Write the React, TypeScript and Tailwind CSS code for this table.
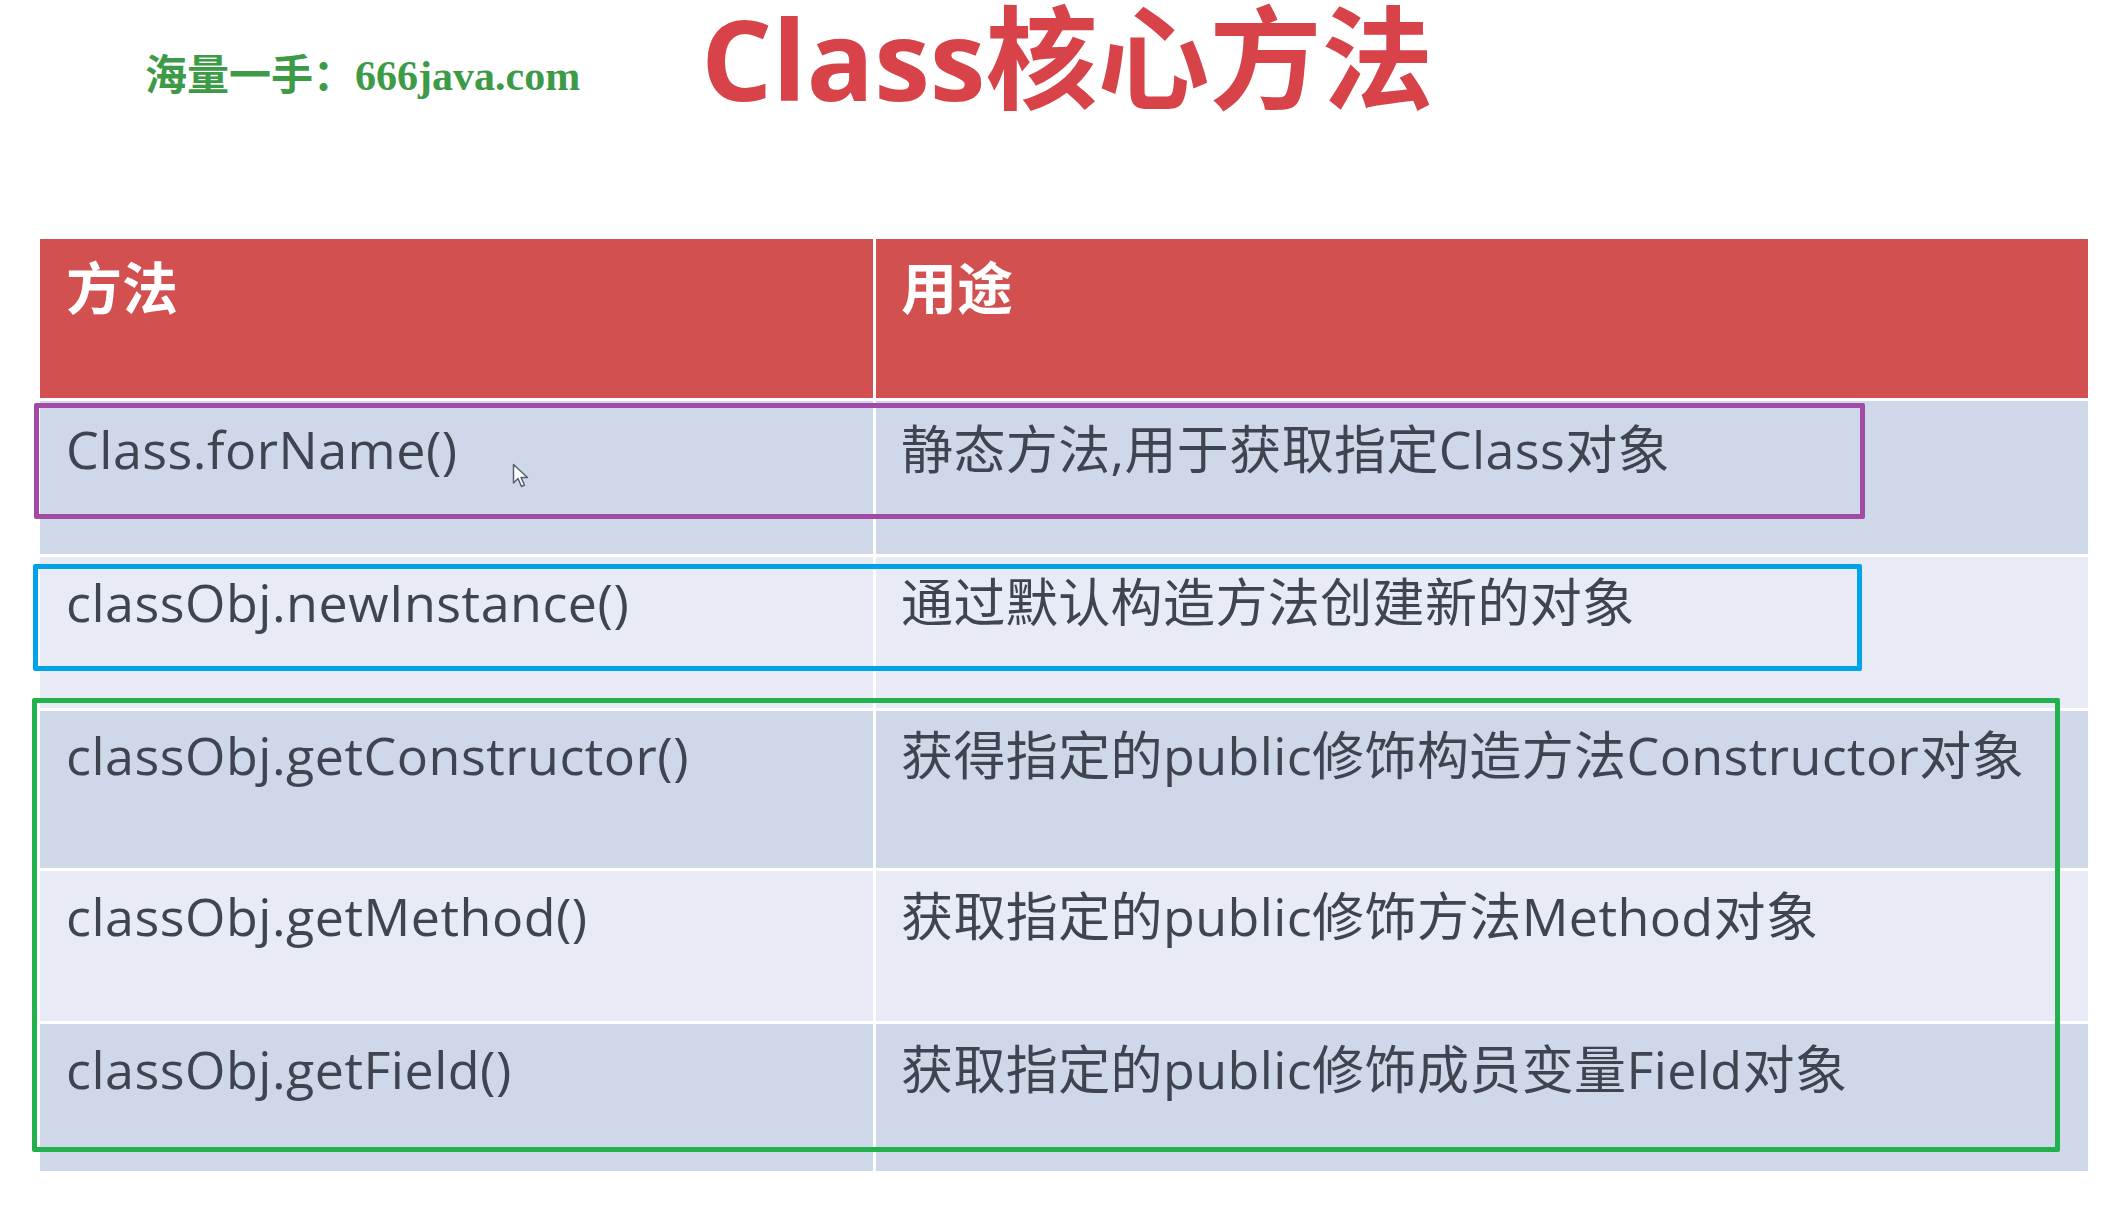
const ROWS = [
  {
    method: "Class.forName()",
    use: "静态方法,用于获取指定Class对象",
    bg: "bg-[#cfd8e9]",
    h: "h-[153px]",
    pt: "pt-[17px]",
  },
  {
    method: "classObj.newInstance()",
    use: "通过默认构造方法创建新的对象",
    bg: "bg-[#e8ebf5]",
    h: "h-[151px]",
    pt: "pt-[14px]",
  },
  {
    method: "classObj.getConstructor()",
    use: "获得指定的public修饰构造方法Constructor对象",
    bg: "bg-[#cfd8e9]",
    h: "h-[157px]",
    pt: "pt-[13px]",
  },
  {
    method: "classObj.getMethod()",
    use: "获取指定的public修饰方法Method对象",
    bg: "bg-[#e8ebf5]",
    h: "h-[150px]",
    pt: "pt-[14px]",
  },
  {
    method: "classObj.getField()",
    use: "获取指定的public修饰成员变量Field对象",
    bg: "bg-[#cfd8e9]",
    h: "h-[147px]",
    pt: "pt-[14px]",
  },
];

function Cursor() {
  return (
    <svg
      className="absolute left-[512px] top-[463px]"
      width="18"
      height="26"
      viewBox="0 0 18 26"
    >
      <path
        d="M1.5 1.5 L1.5 20 L6 15.5 L9.5 23.5 L12.5 22 L9 14.5 L15.5 14.5 Z"
        fill="#ffffff"
        stroke="#5a6070"
        strokeWidth="1.5"
        strokeLinejoin="round"
      />
    </svg>
  );
}

function App() {
  return (
    <div className="relative w-[2106px] h-[1211px] bg-white overflow-hidden">
      {/* Top: watermark + title */}
      <div className="flex items-start h-[239px]">
        <div className="ml-[145px] mt-[55px] w-[556px] text-[42px] leading-none font-bold text-[#3d9b47] font-['Liberation_Serif','Noto_Sans_CJK_SC',serif] whitespace-nowrap">
          海量一手：666java.com
        </div>
        <div className="mt-[2px] text-[112px] leading-none font-bold text-[#d8434a] font-['Open_Sans','Noto_Sans_CJK_SC',sans-serif] whitespace-nowrap">
          Class核心方法
        </div>
      </div>

      {/* Table */}
      <div className="ml-[40px] grid grid-cols-[833px_1212px] gap-[3px] font-['Open_Sans','Noto_Sans_CJK_SC',sans-serif]">
        <div className="h-[159px] bg-[#d35050] pl-[26px] pt-[18px] text-[56px] leading-none font-bold text-white font-['Noto_Sans_CJK_SC',sans-serif]">
          方法
        </div>
        <div className="h-[159px] bg-[#d35050] pl-[25px] pt-[18px] text-[56px] leading-none font-bold text-white font-['Noto_Sans_CJK_SC',sans-serif]">
          用途
        </div>
        {ROWS.map((row) => (
          <div key={row.method} className="contents">
            <div
              className={`${row.bg} ${row.h} ${row.pt} pl-[26px] text-[52px] leading-[62px] tracking-[0.5px] text-[#3f4450] whitespace-nowrap`}
            >
              {row.method}
            </div>
            <div
              className={`${row.bg} ${row.h} ${row.pt} pl-[25px] text-[52px] leading-[62px] tracking-[0.4px] text-[#3f4450] whitespace-nowrap`}
            >
              {row.use}
            </div>
          </div>
        ))}
      </div>

      {/* Highlight boxes drawn over the table */}
      <div className="absolute left-[34px] top-[403px] w-[1831px] h-[116px] border-[5px] border-[#a24aa5] rounded-[2px]" />
      <div className="absolute left-[33px] top-[564px] w-[1829px] h-[107px] border-[5px] border-[#00a3e8] rounded-[2px]" />
      <div className="absolute left-[32px] top-[698px] w-[2028px] h-[454px] border-[5px] border-[#22b14c] rounded-[2px]" />

      <Cursor />
    </div>
  );
}

export default App;
